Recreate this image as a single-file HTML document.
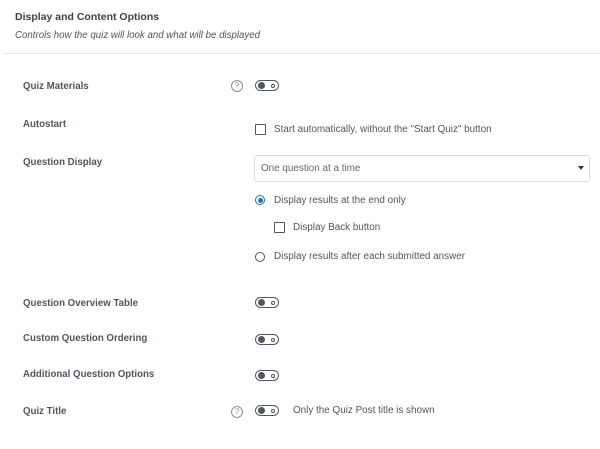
<!DOCTYPE html>
<html><head><style>
body{margin:0;width:600px;height:449px;background:#fff;font-family:"Liberation Sans",sans-serif;position:relative;overflow:hidden;color:#3c434a}
.a{position:absolute;white-space:nowrap}
.t{font-size:10.5px;font-weight:bold;color:#3c434a}
.l{font-size:9.7px;font-weight:bold;color:#50575e}
.n{font-size:9.9px;color:#50575e}
.tg{position:absolute;width:22px;height:9px;border:1.8px solid #50575e;border-radius:7px}
.tg:before{content:"";position:absolute;left:2px;top:1px;width:7px;height:7px;border-radius:50%;background:#50575e}
.tg:after{content:"";position:absolute;right:3px;top:2.5px;width:2px;height:2px;border-radius:50%;border:1.3px solid #50575e}
.hp{position:absolute;width:10px;height:10px;border:1px solid #8c8f94;border-radius:50%;font-size:8px;color:#8c8f94;text-align:center;line-height:10px}
.cb{position:absolute;width:9px;height:9px;border:1.5px solid #50575e;border-radius:1px}
</style></head><body>
<div class="a t" style="left:15px;top:11px">Display and Content Options</div>
<div class="a" style="left:15px;top:30px;font-size:9.7px;font-style:italic;color:#50575e">Controls how the quiz will look and what will be displayed</div>
<div class="a" style="left:4px;top:53px;width:596px;height:1px;background:#e2e4e7"></div>

<div class="a l" style="left:23px;top:81px">Quiz Materials</div>
<div class="hp" style="left:231px;top:80px">?</div>
<div class="tg" style="left:255px;top:80px"></div>

<div class="a l" style="left:23px;top:119px">Autostart</div>
<div class="cb" style="left:255px;top:124px"></div>
<div class="a n" style="left:274px;top:124px">Start automatically, without the "Start Quiz" button</div>

<div class="a l" style="left:23px;top:157px">Question Display</div>
<div class="a" style="left:254px;top:155px;width:334px;height:25px;border:1px solid #dcdcde;border-radius:3px"></div>
<div class="a n" style="left:261px;top:163px;color:#646970">One question at a time</div>
<div class="a" style="left:578px;top:166px;width:0;height:0;border-left:3.5px solid transparent;border-right:3.5px solid transparent;border-top:4px solid #333"></div>

<div class="a" style="left:255px;top:195px;width:8px;height:8px;border:1.5px solid #2271b1;border-radius:50%"></div>
<div class="a" style="left:258px;top:198px;width:5px;height:5px;background:#2271b1;border-radius:50%"></div>
<div class="a n" style="left:274px;top:195px">Display results at the end only</div>
<div class="cb" style="left:274px;top:222px"></div>
<div class="a n" style="left:293px;top:222px">Display Back button</div>
<div class="a" style="left:255px;top:252px;width:8px;height:8px;border:1.5px solid #50575e;border-radius:50%"></div>
<div class="a n" style="left:274px;top:251px">Display results after each submitted answer</div>

<div class="a l" style="left:23px;top:298px">Question Overview Table</div>
<div class="tg" style="left:255px;top:297px"></div>
<div class="a l" style="left:23px;top:333px">Custom Question Ordering</div>
<div class="tg" style="left:255px;top:334px"></div>
<div class="a l" style="left:23px;top:369px">Additional Question Options</div>
<div class="tg" style="left:255px;top:370px"></div>
<div class="a l" style="left:23px;top:406px">Quiz Title</div>
<div class="hp" style="left:231px;top:406px">?</div>
<div class="tg" style="left:255px;top:405px"></div>
<div class="a n" style="left:293px;top:405px">Only the Quiz Post title is shown</div>
</body></html>
